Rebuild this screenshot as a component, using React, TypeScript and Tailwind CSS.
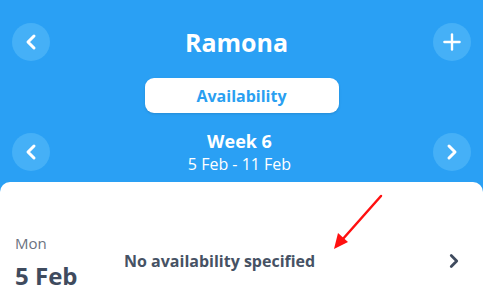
import { ChevronLeft, ChevronRight, Plus } from "lucide-react";

function RoundButton({ children }: { children: React.ReactNode }) {
  return (
    <button
      type="button"
      className="flex h-[38px] w-[38px] items-center justify-center rounded-full bg-[#45b0f7] text-white"
    >
      {children}
    </button>
  );
}

export default function App() {
  return (
    <div
      className="relative h-[300px] w-[483px] overflow-hidden bg-[#2aa0f4]"
      style={{ fontFamily: '"Open Sans", sans-serif' }}
    >
      <div className="flex items-center justify-between px-3 pt-[23px]">
        <RoundButton>
          <ChevronLeft size={24} strokeWidth={3} />
        </RoundButton>
        <div className="mr-[10px] text-[25px] font-bold leading-none text-white">Ramona</div>
        <RoundButton>
          <Plus size={26} strokeWidth={2.2} />
        </RoundButton>
      </div>

      <div className="mt-[17px] flex justify-center">
        <div className="flex h-[35px] w-[194px] items-center justify-center rounded-[9px] bg-white text-[16px] font-bold text-[#2a9ff1] shadow-sm">
          Availability
        </div>
      </div>

      <div className="mt-[16px] flex items-center justify-between px-3">
        <RoundButton>
          <ChevronLeft size={24} strokeWidth={3} />
        </RoundButton>
        <div className="mr-[4px] flex flex-col items-center text-white">
          <div className="text-[18px] font-bold leading-[24px]">Week 6</div>
          <div className="text-[16px] leading-[22px]">5 Feb - 11 Feb</div>
        </div>
        <RoundButton>
          <ChevronRight size={24} strokeWidth={3} />
        </RoundButton>
      </div>

      <div className="mt-[7px] h-[200px] rounded-t-[10px] bg-white">
        <div className="flex items-center pl-[15px] pr-[18px] pt-[51px]">
          <div className="flex w-[109px] flex-col">
            <div className="text-[15px] leading-[20px] text-[#6b7280]">Mon</div>
            <div className="mt-[8px] text-[24px] font-bold leading-[30px] text-[#3f4b5e]">
              5 Feb
            </div>
          </div>
          <div className="-mt-[3px] flex-1 text-[16px] font-bold text-[#465264]">
            No availability specified
          </div>
          <ChevronRight size={22} strokeWidth={3} className="-mt-[3px] text-[#3f4b5e]" />
        </div>
      </div>

      <svg
        className="absolute left-0 top-0"
        width="483"
        height="300"
        viewBox="0 0 483 300"
      >
        <line x1="381" y1="196" x2="342" y2="240" stroke="#ff1010" strokeWidth="2.5" strokeLinecap="round" />
        <polygon points="334,249 338,233 348,242" fill="#ff1010" />
      </svg>
    </div>
  );
}
